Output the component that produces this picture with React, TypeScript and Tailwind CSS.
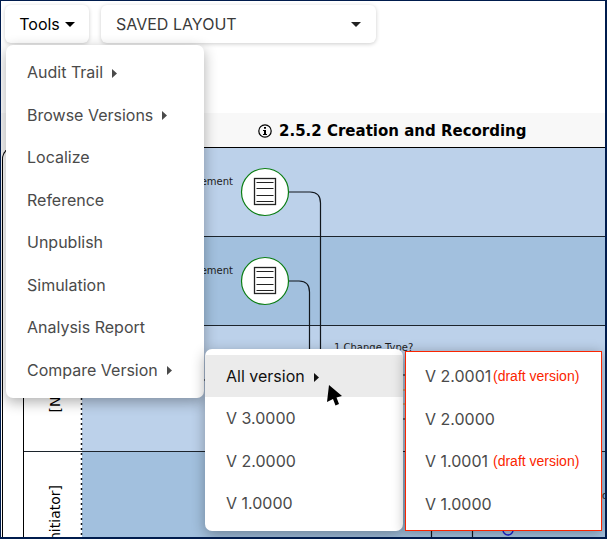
import type { ReactNode } from "react";

const panel =
  "absolute flex flex-col rounded-[7px] bg-white pb-[7px] pt-1.5 shadow-[0_4px_14px_rgba(0,0,0,0.32)]";

function Arrow() {
  return (
    <svg width="5" height="9" viewBox="0 0 5 9" className="ml-[9px] mt-0.5 shrink-0" aria-hidden="true">
      <path d="M0 0 5 4.5 0 9Z" fill="currentColor" />
    </svg>
  );
}

function Caret({ className = "" }: { className?: string }) {
  return (
    <svg width="10" height="5" viewBox="0 0 10 5" className={className} aria-hidden="true">
      <path d="M0 0H10L5 5Z" fill="currentColor" />
    </svg>
  );
}

function Item({ label, arrow, active, note, children }: {
  label: string;
  arrow?: boolean;
  active?: boolean;
  note?: string;
  children?: ReactNode;
}) {
  return (
    <li className="flex flex-1">
      <button
        type="button"
        className={`flex w-full items-center whitespace-nowrap pl-[21px] text-left text-base ${
          active ? "bg-[#ebebeb] text-[#111]" : "text-[#4a4a4a]"
        }`}
      >
        <span className={note ? "w-[68px]" : ""}>{label}</span>
        {note && (
          <span className="font-['Liberation_Sans',Arial,sans-serif] text-sm text-[#fb2500]">{note}</span>
        )}
        {arrow && <Arrow />}
      </button>
      {children}
    </li>
  );
}

function ToolsMenu() {
  return (
    <ul className={`${panel} left-px top-10 z-10 h-[353px] w-[198px]`}>
      <Item label="Audit Trail" arrow />
      <Item label="Browse Versions" arrow />
      <Item label="Localize" />
      <Item label="Reference" />
      <Item label="Unpublish" />
      <Item label="Simulation" />
      <Item label="Analysis Report" />
      <Item label="Compare Version" arrow>
        <ul className={`${panel} left-[199px] top-[304px] h-[182px] w-[198px]`}>
          <Item label="All version" arrow active>
            <ul className="absolute left-[200px] top-0.5 flex h-[180px] w-[197px] flex-col border border-[#fb2500] bg-white pb-[5px] pt-[3px] shadow-[0_2px_12px_rgba(0,0,0,0.32)] [&_button]:pl-[19px]">
              <Item label="V 2.0001" note="(draft version)" />
              <Item label="V 2.0000" />
              <Item label="V 1.0001" note="(draft version)" />
              <Item label="V 1.0000" />
            </ul>
          </Item>
          <Item label="V 3.0000" />
          <Item label="V 2.0000" />
          <Item label="V 1.0000" />
          <svg width="16" height="22" viewBox="0 0 16 22" className="absolute left-[122px] top-9" aria-hidden="true">
            <path d="M2 0 15 11 9.500 12.500 12 19 8.500 20.500 6 14 0 17Z" fill="#000" />
          </svg>
        </ul>
      </Item>
    </ul>
  );
}

function Lane({ size, tone, title, last }: { size: string; tone: string; title?: string; last?: boolean }) {
  return (
    <div className={`flex shrink-0 ${size} ${last ? "" : "border-b border-[#1c242c]"}`}>
      <div className="flex w-[58px] shrink-0 items-center justify-center bg-white pl-1">
        <span className="rotate-180 whitespace-nowrap text-sm [writing-mode:vertical-rl]">{title}</span>
      </div>
      <div className={`flex-1 ${tone}`} />
    </div>
  );
}

function DocumentNode({ y }: { y: number }) {
  return (
    <g transform={`translate(264 ${y})`}>
      <circle r="23.500" fill="#fff" stroke="#0a7d12" strokeWidth="1.200" />
      <rect x="-10.500" y="-13.500" width="21" height="26" fill="#fff" stroke="#222" strokeWidth="1.300" />
      <path d="M-8.500-9.500H8.500M-8.500-3.500H8.500M-8.500 3.500H8.500M-8.500 9.500H8.500" stroke="#222" strokeWidth="1.200" />
    </g>
  );
}

function Connectors() {
  return (
    <svg className="h-full w-full" fontSize="10" fill="#1c1c1c">
      <g fill="none" stroke="#11161c" strokeWidth="1.200">
        <path d="M80.500 35V430" strokeWidth="1.500" strokeDasharray="2 3" />
        <path d="M288 79H309Q319.500 79 319.500 90V290" />
        <path d="M288 168H298Q308.500 168 308.500 179V290" />
        <path d="M199 267H206M398 262H410M398 306H410M430.500 410V430M471.500 410V430" />
        <circle cx="507" cy="417" r="5" stroke="#1b22cf" strokeWidth="1.500" />
        <path d="M398 277H410M398 291H410" stroke="#e38a2e" />
      </g>
      <DocumentNode y={79} />
      <DocumentNode y={168} />
      <text x="232" y="72" textAnchor="end">ement</text>
      <text x="232" y="161" textAnchor="end">ement</text>
      <text x="333" y="238">1.Change Type?</text>
      <text x="601" y="386">d</text>
    </svg>
  );
}

export default function App() {
  return (
    <div className="flex h-screen flex-col overflow-hidden border-b-2 border-l border-r-2 border-t border-[#001c4d] bg-white font-[Inter,'Liberation_Sans',sans-serif]">
      <header className="flex h-28 shrink-0 items-start gap-3 p-1">
        <div className="relative">
          <button
            type="button"
            className="flex h-[38px] w-[84px] items-center justify-center gap-[5px] rounded-md bg-white text-base text-black shadow-[0_1px_4px_rgba(0,0,0,0.2)]"
          >
            Tools
            <Caret />
          </button>
          <ToolsMenu />
        </div>
        <div className="relative">
          <select
            aria-label="Layout"
            className="h-[38px] w-[275px] appearance-none rounded-md bg-white pl-[15px] text-base text-[#3a3a3a] shadow-[0_1px_4px_rgba(0,0,0,0.2)]"
          >
            <option>SAVED LAYOUT</option>
          </select>
          <Caret className="pointer-events-none absolute right-[15px] top-[17px] text-[#222]" />
        </div>
      </header>

      <main className="flex min-h-0 flex-1 flex-col bg-[#f8f8f8] font-['DejaVu_Sans',Verdana,sans-serif]">
        <h1 className="flex h-[34px] shrink-0 items-center gap-[7px] pl-[257px] pt-0.5 text-[15px] font-bold text-black">
          <svg width="14" height="14" viewBox="0 0 14 14" aria-hidden="true">
            <circle cx="7" cy="7" r="6.200" fill="none" stroke="#000" strokeWidth="1.200" />
            <path d="M6 3H8V4.700H6ZM5 6H8V10H9V11H5V10H6V7H5Z" fill="#000" />
          </svg>
          2.5.2 Creation and Recording
        </h1>
        <section className="relative flex min-h-0 flex-1">
          <div className="ml-px w-[21px] shrink-0 rounded-tl-xl border-l border-t border-black bg-white" />
          <div className="flex flex-1 flex-col border-l border-t border-black">
            <Lane size="h-[89px]" tone="bg-[#bcd1ea]" />
            <Lane size="h-[89px]" tone="bg-[#a2c0de]" />
            <Lane size="h-[126px]" tone="bg-[#bcd1ea]" title="[None]" />
            <Lane size="h-[131px]" tone="bg-[#a2c0de]" title="[Initiator]" last />
          </div>
          <div className="absolute inset-x-0 -top-[34px] bottom-0">
            <Connectors />
          </div>
        </section>
      </main>
    </div>
  );
}
